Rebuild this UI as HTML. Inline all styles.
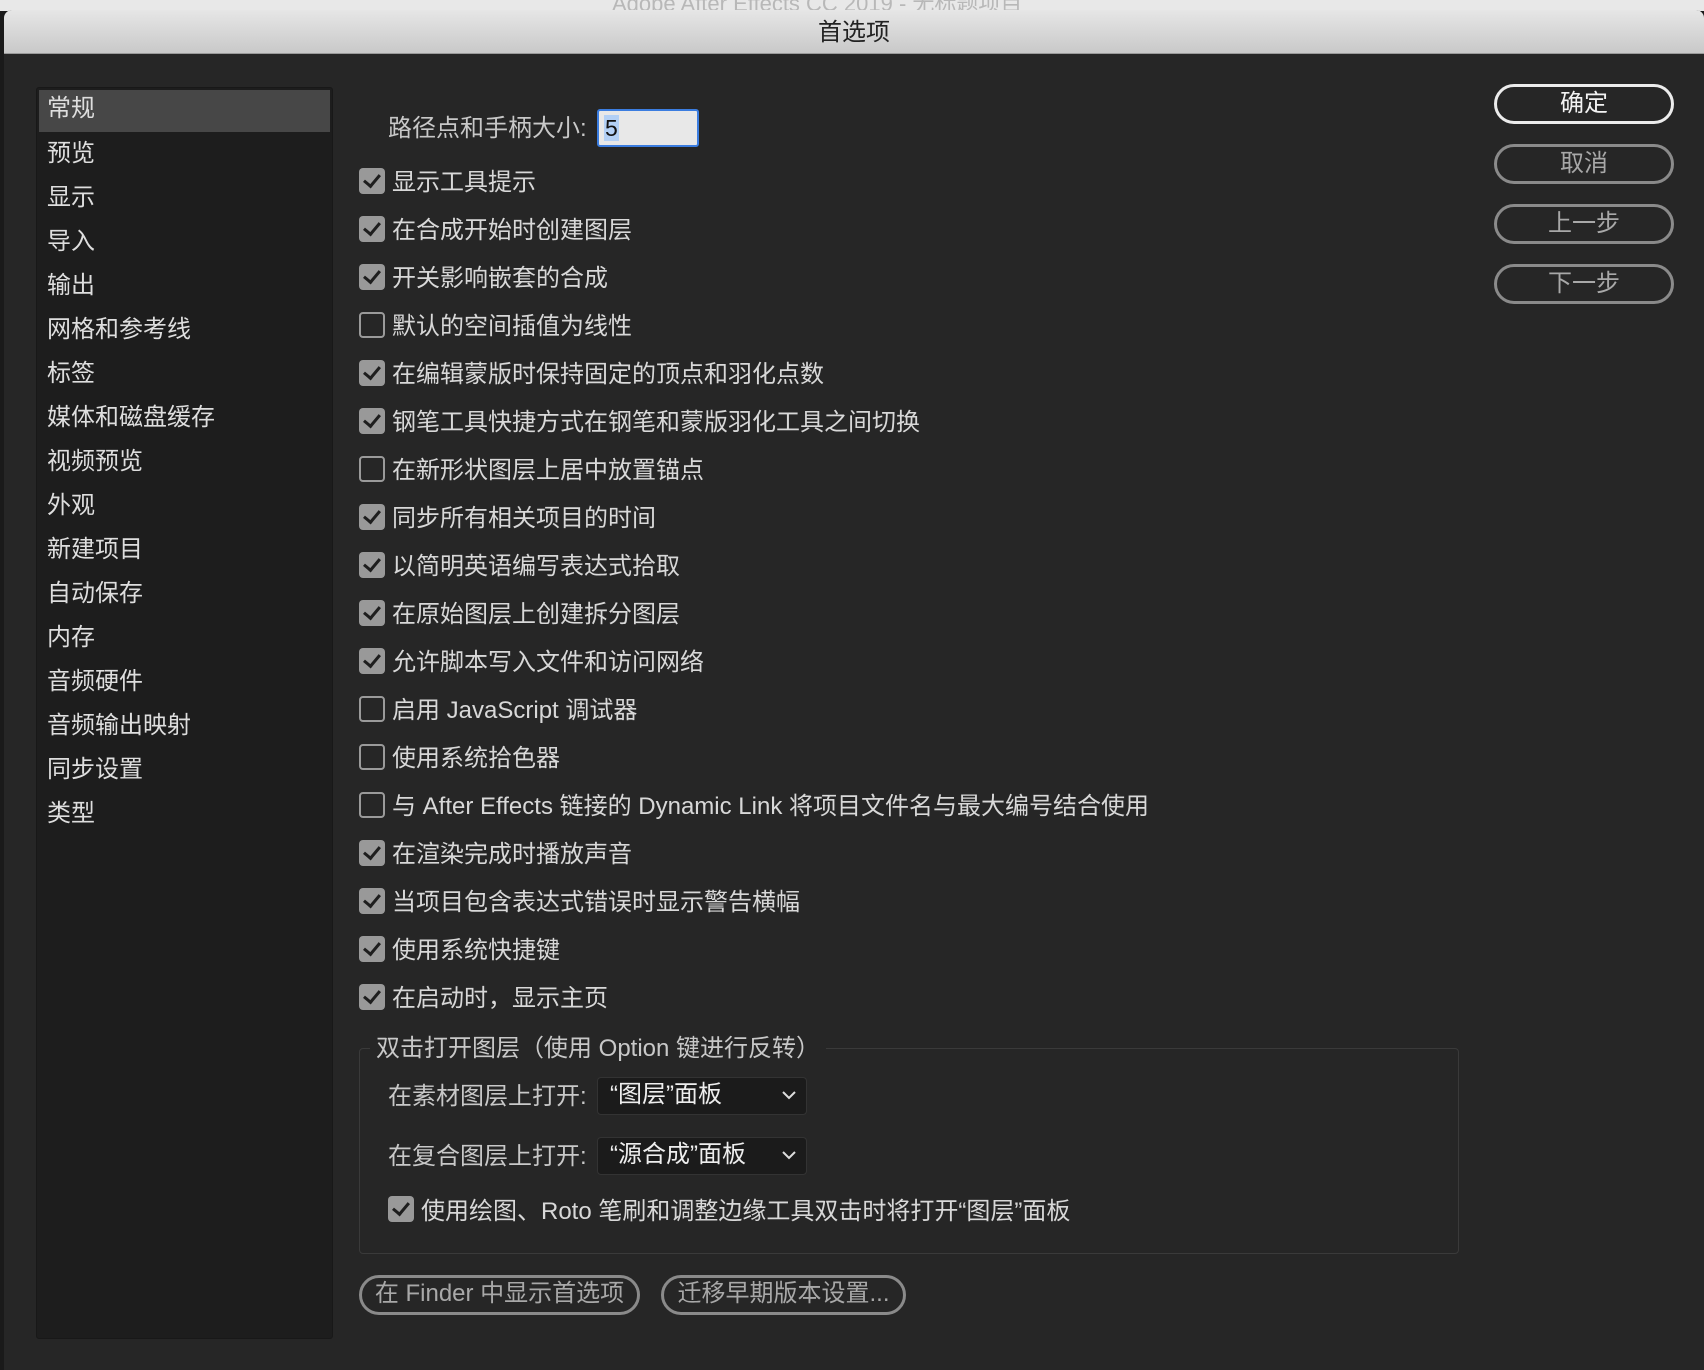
<!DOCTYPE html>
<html><head><meta charset="utf-8"><style>
body{margin:0;width:1704px;height:1370px;background:#1a1a1a;position:relative;overflow:hidden;font-family:"Liberation Sans","Noto Sans CJK SC",sans-serif;}
.top{position:absolute;left:0;top:0;width:1704px;height:11px;background:#e8e8e8;}
.top span{position:absolute;left:612px;top:-14px;font-size:22px;color:#b8b8b8;}
.dlg{position:absolute;left:4px;top:10px;width:1700px;height:1360px;background:#262626;border-radius:8px 8px 0 0;overflow:hidden;}
.tb{position:absolute;left:0;top:0;width:100%;height:43px;background:linear-gradient(#e6e6e6,#c9c9c9);border-bottom:1px solid #9a9a9a;text-align:center;font-size:24px;line-height:46px;color:#222;}
.side{position:absolute;left:32px;top:77px;width:295px;height:1250px;background:#1d1d1d;border:1px solid #181818;border-radius:3px;}
.side div{height:44px;line-height:40px;padding-left:10px;font-size:24px;color:#dedede;}
.side div.sel{background:#474747;margin:2px;padding-left:8px;height:42px;line-height:38px;}
.a{position:absolute;font-size:24px;color:#d8d8d8;white-space:nowrap;}
.cb{position:absolute;width:26px;height:26px;box-sizing:border-box;border-radius:4px;}
.on{background:#999;}
.on::after{content:"";position:absolute;left:8px;top:3px;width:7px;height:13px;border:solid #1e1e1e;border-width:0 3.5px 3.5px 0;transform:rotate(40deg);}
.off{border:2px solid #9a9a9a;}
.btn{position:absolute;box-sizing:border-box;border:3px solid #8a8a8a;border-radius:22px;color:#a8a8a8;text-align:center;font-size:24px;}
.dd{position:absolute;left:593px;width:210px;height:38px;background:#1b1b1b;border:1px solid #333;border-radius:4px;color:#eee;font-size:24px;line-height:34px;box-sizing:border-box;padding-left:12px;}
.dd svg{position:absolute;right:10px;top:13px;}
</style></head><body>
<div class="top"><span>Adobe After Effects CC 2019 - 无标题项目</span></div>
<div class="dlg">
<div class="tb">首选项</div>
<div class="side">
<div class="sel">常规</div><div>预览</div><div>显示</div><div>导入</div><div>输出</div><div>网格和参考线</div><div>标签</div><div>媒体和磁盘缓存</div><div>视频预览</div><div>外观</div><div>新建项目</div><div>自动保存</div><div>内存</div><div>音频硬件</div><div>音频输出映射</div><div>同步设置</div><div>类型</div>
</div>
<div class="a" style="left:384px;top:98px;color:#c8c8c8">路径点和手柄大小:</div>
<div style="position:absolute;left:593px;top:99px;width:102px;height:38px;box-sizing:border-box;background:#e8e8e8;border:2px solid #3b7de0;border-radius:3px;"><span style="position:absolute;left:5px;top:4px;background:#b3d0f5;font-size:23px;color:#111;line-height:26px;padding:0 1px">5</span></div>
<div id="list"></div>
<div style="position:absolute;left:355px;top:1038px;width:1098px;height:204px;border:1px solid #3a3a3a;border-radius:4px;"></div>
<div class="a" style="left:366px;top:1018px;background:#262626;padding:0 6px;color:#c8c8c8">双击打开图层（使用 Option 键进行反转）</div>
<div class="a" style="left:384px;top:1066px;color:#c8c8c8">在素材图层上打开:</div>
<div class="dd" style="top:1067px">“图层”面板<svg width="14" height="9"><path d="M1 1L7 7L13 1" stroke="#ddd" stroke-width="2" fill="none"/></svg></div>
<div class="a" style="left:384px;top:1126px;color:#c8c8c8">在复合图层上打开:</div>
<div class="dd" style="top:1127px">“源合成”面板<svg width="14" height="9"><path d="M1 1L7 7L13 1" stroke="#ddd" stroke-width="2" fill="none"/></svg></div>
<div class="cb on" style="left:384px;top:1186px"></div>
<div class="a" style="left:417px;top:1181px">使用绘图、Roto 笔刷和调整边缘工具双击时将打开“图层”面板</div>
<div class="btn" style="left:355px;top:1265px;width:281px;height:40px;line-height:32px;">在 Finder 中显示首选项</div>
<div class="btn" style="left:657px;top:1265px;width:245px;height:40px;line-height:32px;">迁移早期版本设置...</div>
<div class="btn" style="left:1490px;top:74px;width:180px;height:40px;line-height:33px;border-color:#ececec;color:#f2f2f2;">确定</div>
<div class="btn" style="left:1490px;top:134px;width:180px;height:40px;line-height:33px;">取消</div>
<div class="btn" style="left:1490px;top:194px;width:180px;height:40px;line-height:33px;">上一步</div>
<div class="btn" style="left:1490px;top:254px;width:180px;height:40px;line-height:33px;">下一步</div>
</div>
<script>
var items=[[1,"显示工具提示"],[1,"在合成开始时创建图层"],[1,"开关影响嵌套的合成"],[0,"默认的空间插值为线性"],[1,"在编辑蒙版时保持固定的顶点和羽化点数"],[1,"钢笔工具快捷方式在钢笔和蒙版羽化工具之间切换"],[0,"在新形状图层上居中放置锚点"],[1,"同步所有相关项目的时间"],[1,"以简明英语编写表达式拾取"],[1,"在原始图层上创建拆分图层"],[1,"允许脚本写入文件和访问网络"],[0,"启用 JavaScript 调试器"],[0,"使用系统拾色器"],[0,"与 After Effects 链接的 Dynamic Link 将项目文件名与最大编号结合使用"],[1,"在渲染完成时播放声音"],[1,"当项目包含表达式错误时显示警告横幅"],[1,"使用系统快捷键"],[1,"在启动时，显示主页"]];
var h="";items.forEach(function(it,i){var y=158+i*48;h+='<div class="cb '+(it[0]?'on':'off')+'" style="left:355px;top:'+y+'px"></div><div class="a" style="left:388px;top:'+(y-6)+'px">'+it[1]+'</div>';});
document.getElementById("list").innerHTML=h;
</script>
</body></html>
